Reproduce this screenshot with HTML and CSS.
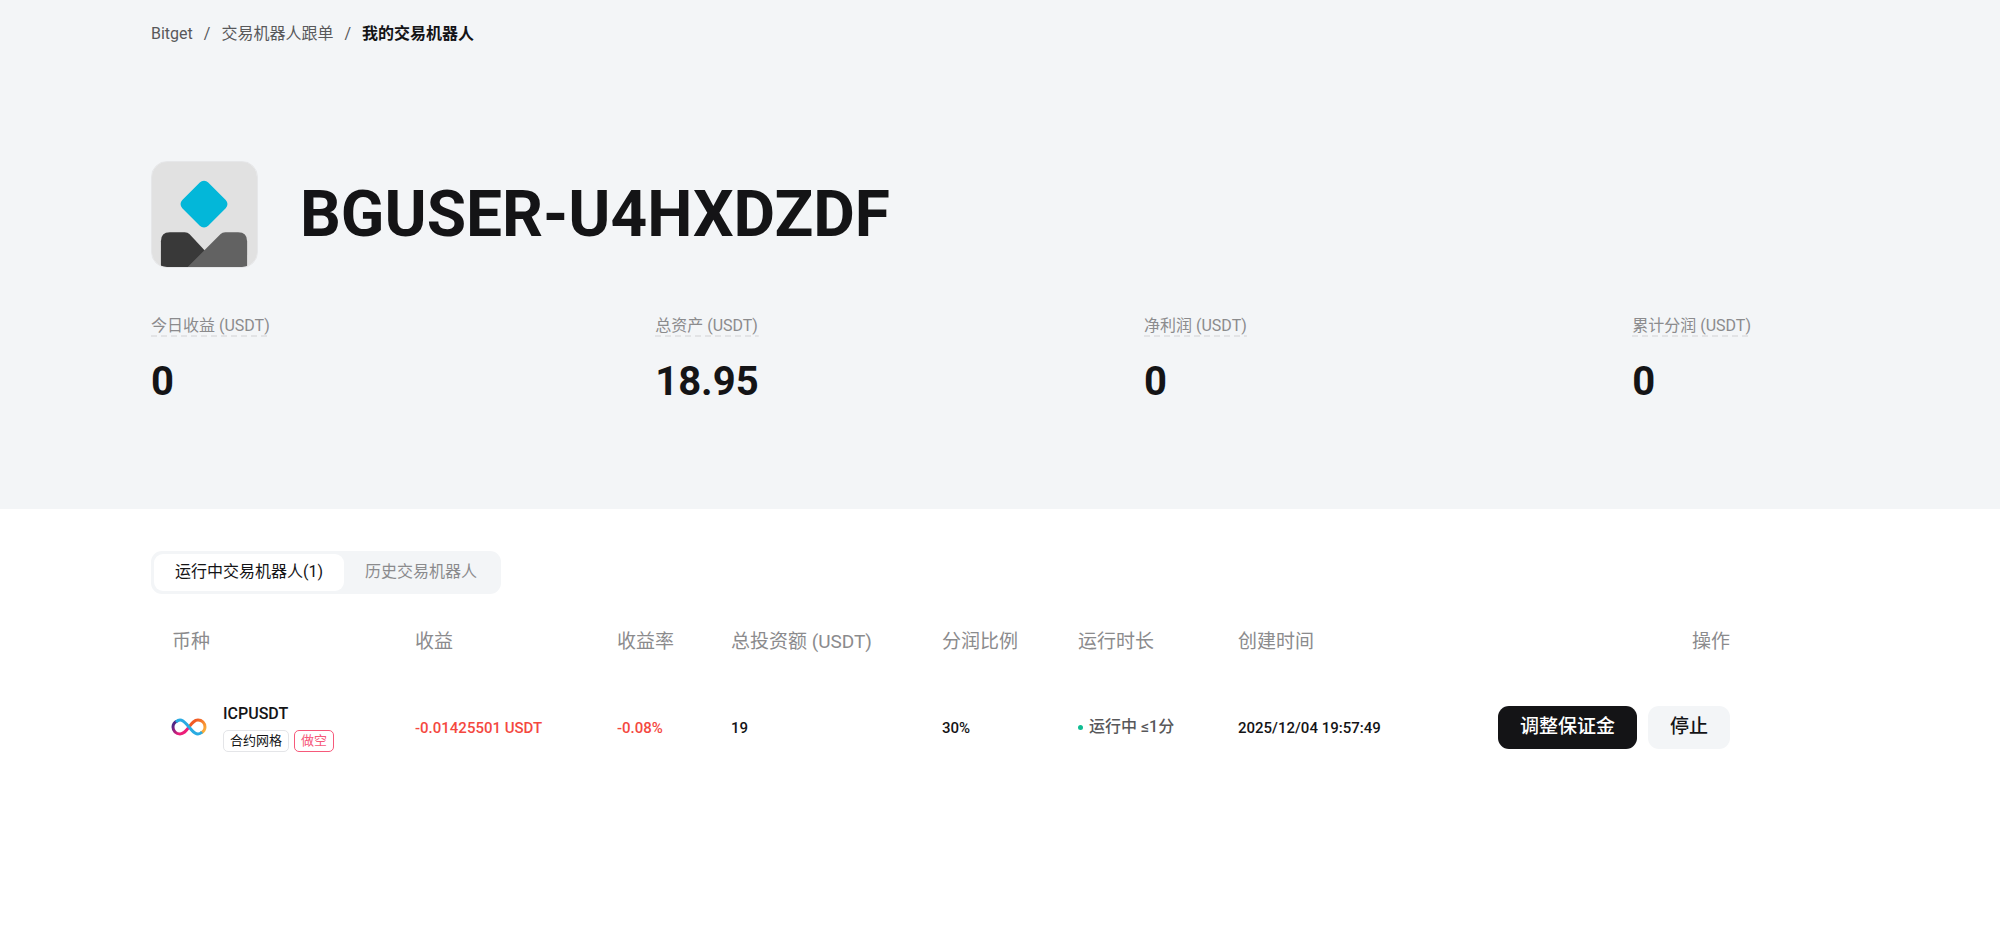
FILE: index.html
```
<!DOCTYPE html>
<html lang="zh-CN">
<head>
  <meta charset="UTF-8" />
  <meta name="viewport" content="width=device-width, initial-scale=1.0"/>
  <title>我的交易机器人 - Bitget</title>
  <link rel="stylesheet" href="styles.css">
</head>
<body>
  <header class="profile">
    <nav class="breadcrumb">
      <a href="#">Bitget</a>
      <span>/</span>
      <a href="#">交易机器人跟单</a>
      <span>/</span>
      <a class="current" href="#">我的交易机器人</a>
    </nav>

    <div class="user">
      <svg class="avatar" viewBox="0 0 106 106" aria-hidden="true">
        <rect width="106" height="106" fill="#e1e1e1"/>
        <rect x="34" y="24" width="37" height="37" rx="6" fill="#03b7d9" transform="rotate(45 52.5 42.5)"/>
        <path d="M9 106V80q0-9 9-9h15q3 0 5 2l15 16v17z" fill="#393939"/>
        <path d="M36 106L69 73q2-2 5-2h13q9 0 9 9v26z" fill="#626262"/>
      </svg>
      <h1>BGUSER-U4HXDZDF</h1>
    </div>

    <div class="stats">
      <div class="stat">
        <span class="stat-label">今日收益 (USDT)</span>
        <strong>0</strong>
      </div>
      <div class="stat">
        <span class="stat-label">总资产 (USDT)</span>
        <strong>18.95</strong>
      </div>
      <div class="stat">
        <span class="stat-label">净利润 (USDT)</span>
        <strong>0</strong>
      </div>
      <div class="stat">
        <span class="stat-label">累计分润 (USDT)</span>
        <strong>0</strong>
      </div>
    </div>
  </header>

  <main class="bots">
    <div class="tabs">
      <button class="tab active" type="button">运行中交易机器人(1)</button>
      <button class="tab" type="button">历史交易机器人</button>
    </div>

    <table class="bot-table">
      <thead>
        <tr>
          <th class="col-coin">币种</th>
          <th class="col-profit">收益</th>
          <th class="col-rate">收益率</th>
          <th class="col-total">总投资额 (USDT)</th>
          <th class="col-share">分润比例</th>
          <th class="col-runtime">运行时长</th>
          <th class="col-created">创建时间</th>
          <th class="col-actions">操作</th>
        </tr>
      </thead>
      <tbody>
        <tr>
          <td>
            <div class="coin">
              <svg class="coin-logo" viewBox="0 0 34 18" fill="none" stroke-width="3" aria-hidden="true">
                <defs>
                  <linearGradient id="orange" x1="17" y1="2" x2="32" y2="14" gradientUnits="userSpaceOnUse">
                    <stop offset="0.3" stop-color="#f15a24"/>
                    <stop offset="1" stop-color="#fbb03b"/>
                  </linearGradient>
                  <linearGradient id="pink" x1="14" y1="16" x2="2" y2="4" gradientUnits="userSpaceOnUse">
                    <stop offset="0.3" stop-color="#ed1e79"/>
                    <stop offset="0.9" stop-color="#522785"/>
                  </linearGradient>
                </defs>
                <path d="M17 9C20 5 22 2 26 2c4 0 7 3 7 7 0 3-2 5-4 6" stroke="url(#orange)"/>
                <path d="M17 9C14 13 12 16 8 16 4 16 1 13 1 9c0-3 2-5 4-6" stroke="url(#pink)"/>
                <path d="M4 4c1-1 2-2 4-2 4 0 6 4 9 7s5 7 9 7c2 0 3-1 4-2" stroke="#29abe2"/>
              </svg>
              <div class="coin-info">
                <span>ICPUSDT</span>
                <div class="tags">
                  <span class="tag">合约网格</span>
                  <span class="tag tag-short">做空</span>
                </div>
              </div>
            </div>
          </td>
          <td class="number negative">-0.01425501 USDT</td>
          <td class="number negative">-0.08%</td>
          <td class="number">19</td>
          <td class="number">30%</td>
          <td><span class="status">运行中 ≤1分</span></td>
          <td class="number">2025/12/04 19:57:49</td>
          <td>
            <div class="actions">
              <button class="btn btn-dark" type="button">调整保证金</button>
              <button class="btn" type="button">停止</button>
            </div>
          </td>
        </tr>
      </tbody>
    </table>
  </main>
</body>
</html>
```
FILE: styles.css
```
body {
  margin: 0;
  font-family: Roboto, "Noto Sans CJK SC", sans-serif;
  font-size: 16px;
  line-height: 24px;
  color: #141416;
  background-color: #fff;
}

button {
  font: inherit;
  border: none;
  cursor: pointer;
}

.profile,
.bots {
  padding-left: 151px;
  padding-right: 249px;
}

.profile {
  padding-top: 22px;
  padding-bottom: 102px;
  background-color: #f3f5f7;
}

.breadcrumb {
  display: flex;
  gap: 11px;
  color: #58585a;
}

.breadcrumb a {
  color: inherit;
  text-decoration: none;
}

.breadcrumb .current {
  color: #141416;
  font-weight: bold;
}

.user {
  display: flex;
  align-items: center;
  gap: 42px;
  margin-top: 115px;
}

.avatar {
  width: 107px;
  height: 107px;
  box-sizing: border-box;
  border: 1px solid #e6e7e9;
  border-radius: 16px;
}

.user h1 {
  margin: 0;
  font-size: 64px;
  line-height: 76px;
}

/* account totals */
.stats {
  display: flex;
  justify-content: space-between;
  margin-top: 47px;
}

.stat {
  width: min-content;
  white-space: nowrap;
}

.stat-label {
  display: block;
  line-height: 22px;
  color: #8b8b8d;
  background: repeating-linear-gradient(90deg, #e2e3e5 0 6px, transparent 6px 10px) bottom / 100% 2px no-repeat;
}

.stat strong {
  display: block;
  margin-top: 20px;
  font-size: 40px;
  line-height: 50px;
}

.bots {
  padding-top: 42px;
}

.tabs {
  display: inline-flex;
  padding: 3px;
  border-radius: 11px;
  background-color: #f3f5f7;
}

.tab {
  padding: 6px 21px 7px;
  border-radius: 9px;
  color: #8b8b8d;
  background-color: transparent;
}

.tab.active {
  color: #141416;
  background-color: #fff;
}

.bot-table {
  width: 100%;
  margin-top: 21px;
  border-collapse: collapse;
  table-layout: fixed;
}

.bot-table th,
.bot-table td {
  box-sizing: border-box;
  padding: 0 0 0 21px;
  text-align: left;
  font-weight: 500;
  white-space: nowrap;
}

.bot-table th {
  height: 54px;
  color: #8b8b8d;
  font-size: 19px;
  font-weight: normal;
}

.bot-table td {
  height: 116px;
}

.bot-table .number {
  padding-top: 2px;
  font-size: 15px;
}

.bot-table .negative {
  color: #f4483f;
}

.bot-table .col-actions {
  padding-right: 21px;
  text-align: right;
}

.col-coin {
  width: 243px;
}

.col-profit {
  width: 202px;
}

.col-rate {
  width: 114px;
}

.col-total {
  width: 211px;
}

.col-share {
  width: 136px;
}

.col-runtime {
  width: 160px;
}

.col-created {
  width: 240px;
}

.coin {
  display: flex;
  align-items: center;
  gap: 17px;
}

.coin-logo {
  width: 34px;
  height: 18px;
  overflow: visible;
}

.coin-info {
  display: flex;
  flex-direction: column;
  gap: 4px;
}

.tags {
  display: flex;
  gap: 5px;
}

.tag {
  padding: 0 6px;
  border: 1px solid #e4e5e8;
  border-radius: 5px;
  font-size: 13px;
  font-weight: normal;
  line-height: 20px;
}

.tag-short {
  color: #f6597a;
  border-color: #f6597a;
}

.status {
  display: flex;
  align-items: center;
  gap: 6px;
  color: #58585a;
}

.status::before {
  content: "";
  width: 5px;
  height: 5px;
  border-radius: 50%;
  background-color: #0fbc92;
}

.actions {
  display: flex;
  justify-content: flex-end;
  gap: 11px;
  padding-right: 21px;
}

.btn {
  padding: 9px 22px 10px;
  border-radius: 11px;
  color: #141416;
  background-color: #f3f5f7;
  font-size: 19px;
  font-weight: 500;
}

.btn-dark {
  color: #fff;
  background-color: #141416;
}
```
